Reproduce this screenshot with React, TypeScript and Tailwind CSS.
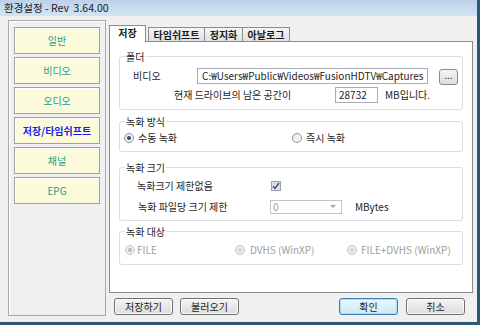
import React from 'react';

const navItems = ['일반', '비디오', '오디오', '저장/타임쉬프트', '채널', 'EPG'];
const tabs = ['타임쉬프트', '정지화', '아날로그'];

function Radio({ checked = false, disabled = false }: { checked?: boolean; disabled?: boolean }) {
  return (
    <span
      className={
        'flex h-[10px] w-[10px] shrink-0 items-center justify-center rounded-full border ' +
        (disabled
          ? 'border-[#c8c8c8] bg-[#ececec]'
          : 'border-[#8e8f8f] bg-gradient-to-br from-[#e6e6e6] to-[#ffffff]')
      }
    >
      {checked && (
        <span
          className={
            'h-[4px] w-[4px] rounded-full ' + (disabled ? 'bg-[#b8b8b8]' : 'bg-[#1b4f8c]')
          }
        />
      )}
      {!checked && disabled && <span className="h-[4px] w-[4px] rounded-full bg-[#d8d8d8]" />}
    </span>
  );
}

function Group({ title, children, className = '' }: { title: string; children: React.ReactNode; className?: string }) {
  return (
    <fieldset className={'rounded-[3px] border border-[#d5dfe5] ' + className}>
      <legend className="ml-[5px] px-[1px] text-[10px] leading-[11px] text-[#1e1e1e]">{title}</legend>
      {children}
    </fieldset>
  );
}

function WinButton({ label, focused = false, className = '' }: { label: string; focused?: boolean; className?: string }) {
  return (
    <div
      className={
        'flex h-[17px] w-[59px] items-center justify-center rounded-[3px] border text-[10px] leading-none text-[#1e1e1e] ' +
        (focused
          ? 'border-[#3c7fb1] bg-gradient-to-b from-[#eaf6fd] to-[#cde9f8] shadow-[inset_0_0_0_1px_#a8dcf8]'
          : 'border-[#707070] bg-gradient-to-b from-[#f4f4f4] to-[#dcdcdc] shadow-[inset_0_0_0_1px_#fcfcfc]') +
        ' ' +
        className
      }
    >
      {label}
    </div>
  );
}

export default function App() {
  return (
    <div className="h-[325px] w-[480px] overflow-hidden bg-[#ffffff] font-['Noto_Sans_CJK_KR','Noto_Sans',sans-serif]">
      <div className="flex h-[325px] w-[480px] flex-col border-b-[3px] border-r-[3px] border-[#2c5776] bg-[#f0f0f0]">
        {/* title bar */}
        <div className="flex h-[16px] shrink-0 items-center bg-gradient-to-b from-[#bcd2ea] to-[#d3e3f3] pl-[4px] text-[10.5px] leading-none text-[#1a1a1a]">
          환경설정 - Rev&nbsp;&nbsp;3.64.00
        </div>

        <div className="flex flex-1 pl-[8px] pt-[4px]">
          {/* left nav */}
          <div className="flex h-[296px] w-[98px] flex-col gap-[3px] border border-[#a8a8a8] px-[5px] pt-[6px] shadow-[inset_1px_1px_0_#ffffff]">
            {navItems.map((item) => {
              const active = item === '저장/타임쉬프트';
              return (
                <div
                  key={item}
                  className={
                    'flex h-[27px] w-[86px] items-center justify-center border border-[#a0a0a0] bg-[#fbfbdc] text-[10px] leading-none shadow-[inset_1px_1px_0_#ffffff] ' +
                    (active ? 'font-bold text-[#1c1cf0]' : 'text-[#2f9a86]')
                  }
                >
                  {item}
                </div>
              );
            })}
          </div>

          {/* right side */}
          <div className="ml-[3px] flex w-[364px] flex-col pt-[5px]">
            {/* tab headers */}
            <div className="relative z-10 flex h-[16px] items-end">
              <div className="-mb-[1px] flex h-[17px] w-[37px] items-start justify-center border border-b-0 border-[#898c95] bg-white pt-[2px] text-[10px] font-bold leading-none text-[#1a1a1a]">
                저장
              </div>
              <div className="flex h-[14px] items-end">
                {tabs.map((t, i) => (
                  <div
                    key={t}
                    className={
                      'flex h-[14px] items-center justify-center border border-b-0 border-[#898c95] bg-gradient-to-b from-[#f5f5f5] to-[#e1e1e1] text-[10px] font-bold leading-none text-[#1a1a1a] ' +
                      (i === 0 ? 'ml-[2px] w-[57px]' : i === 1 ? '-ml-[1px] w-[39px]' : '-ml-[1px] w-[48px]')
                    }
                  >
                    {t}
                  </div>
                ))}
              </div>
            </div>

            {/* tab panel */}
            <div className="flex h-[252px] flex-col border border-[#898c95] bg-white px-[9px] pt-[9px]">
              <Group title="폴더" className="pb-[6px]">
                <div className="mt-[5px] flex h-[17px] items-center pl-[13px]">
                  <span className="w-[64px] text-[10px] leading-none text-[#1e1e1e]">비디오</span>
                  <div className="flex h-[16px] w-[231px] items-center border border-[#abadb3] bg-white pl-[4px] text-[10px] leading-none text-[#1e1e1e]">
                    C:₩Users₩Public₩Videos₩FusionHDTV₩Captures
                  </div>
                  <div className="ml-[11px] mt-[2px] flex h-[16px] w-[19px] items-center justify-center rounded-[3px] border border-[#8a8a8a] bg-gradient-to-b from-[#f6f6f6] to-[#dddddd] pb-[3px] text-[10px] leading-none text-[#1e1e1e]">
                    ...
                  </div>
                </div>
                <div className="mt-[3px] flex h-[16px] items-center pl-[54px]">
                  <span className="w-[161px] text-[10px] leading-none text-[#1e1e1e]">현재 드라이브의 남은 공간이</span>
                  <div className="flex h-[16px] w-[43px] items-center border border-[#abadb3] bg-white pl-[3px] text-[10px] leading-none text-[#1e1e1e]">
                    28732
                  </div>
                  <span className="ml-[7px] text-[10px] leading-none text-[#1e1e1e]">MB입니다.</span>
                </div>
              </Group>

              <Group title="녹화 방식" className="mt-[6px] pb-[6px]">
                <div className="mt-[4px] flex h-[14px] items-center pl-[4px]">
                  <div className="flex w-[168px] items-center gap-[4px]">
                    <Radio checked />
                    <span className="text-[10px] leading-none text-[#1e1e1e]">수동 녹화</span>
                  </div>
                  <div className="flex items-center gap-[4px]">
                    <Radio />
                    <span className="text-[10px] leading-none text-[#1e1e1e]">즉시 녹화</span>
                  </div>
                </div>
              </Group>

              <Group title="녹화 크기" className="mt-[10px] pb-[6px]">
                <div className="mt-[7px] flex h-[12px] items-center pl-[17px]">
                  <span className="w-[134px] text-[10px] leading-none text-[#1e1e1e]">녹화크기 제한없음</span>
                  <span className="flex h-[10px] w-[10px] items-center justify-center border border-[#a0a0a0] bg-[#dedede]">
                    <svg width="8" height="8" viewBox="0 0 8 8">
                      <path d="M1 4.2 L3 6.4 L7 1" fill="none" stroke="#2a4f9e" strokeWidth="1.4" />
                    </svg>
                  </span>
                </div>
                <div className="mt-[8px] flex h-[14px] items-center pl-[18px]">
                  <span className="w-[132px] text-[10px] leading-none text-[#1e1e1e]">녹화 파일당 크기 제한</span>
                  <div className="flex h-[14px] w-[72px] items-center justify-between border border-[#c4c4c4] bg-white pl-[2px] pr-[5px] text-[10px] leading-none text-[#a0a0a0]">
                    <span>0</span>
                    <svg width="6" height="4" viewBox="0 0 6 4">
                      <path d="M0 0 L6 0 L3 3 Z" fill="#a8a8a8" />
                    </svg>
                  </div>
                  <span className="ml-[13px] text-[10px] leading-none text-[#1e1e1e]">MBytes</span>
                </div>
              </Group>

              <Group title="녹화 대상" className="mt-[5px] pb-[8px]">
                <div className="mt-[7px] flex h-[12px] items-center pl-[5px] text-[10px] leading-none text-[#a0a0a0]">
                  <div className="flex w-[110px] items-center gap-[2px]">
                    <Radio checked disabled />
                    <span>FILE</span>
                  </div>
                  <div className="flex w-[112px] items-center gap-[5px]">
                    <Radio disabled />
                    <span>DVHS (WinXP)</span>
                  </div>
                  <div className="flex items-center gap-[4px]">
                    <Radio disabled />
                    <span>FILE+DVHS (WinXP)</span>
                  </div>
                </div>
              </Group>
            </div>

            {/* bottom buttons */}
            <div className="mt-[5px] flex pl-[5px] pr-[8px]">
              <WinButton label="저장하기" />
              <WinButton label="불러오기" className="ml-[7px]" />
              <div className="flex-1" />
              <WinButton label="확인" focused />
              <WinButton label="취소" className="ml-[8px]" />
            </div>
          </div>
        </div>
      </div>
    </div>
  );
}
